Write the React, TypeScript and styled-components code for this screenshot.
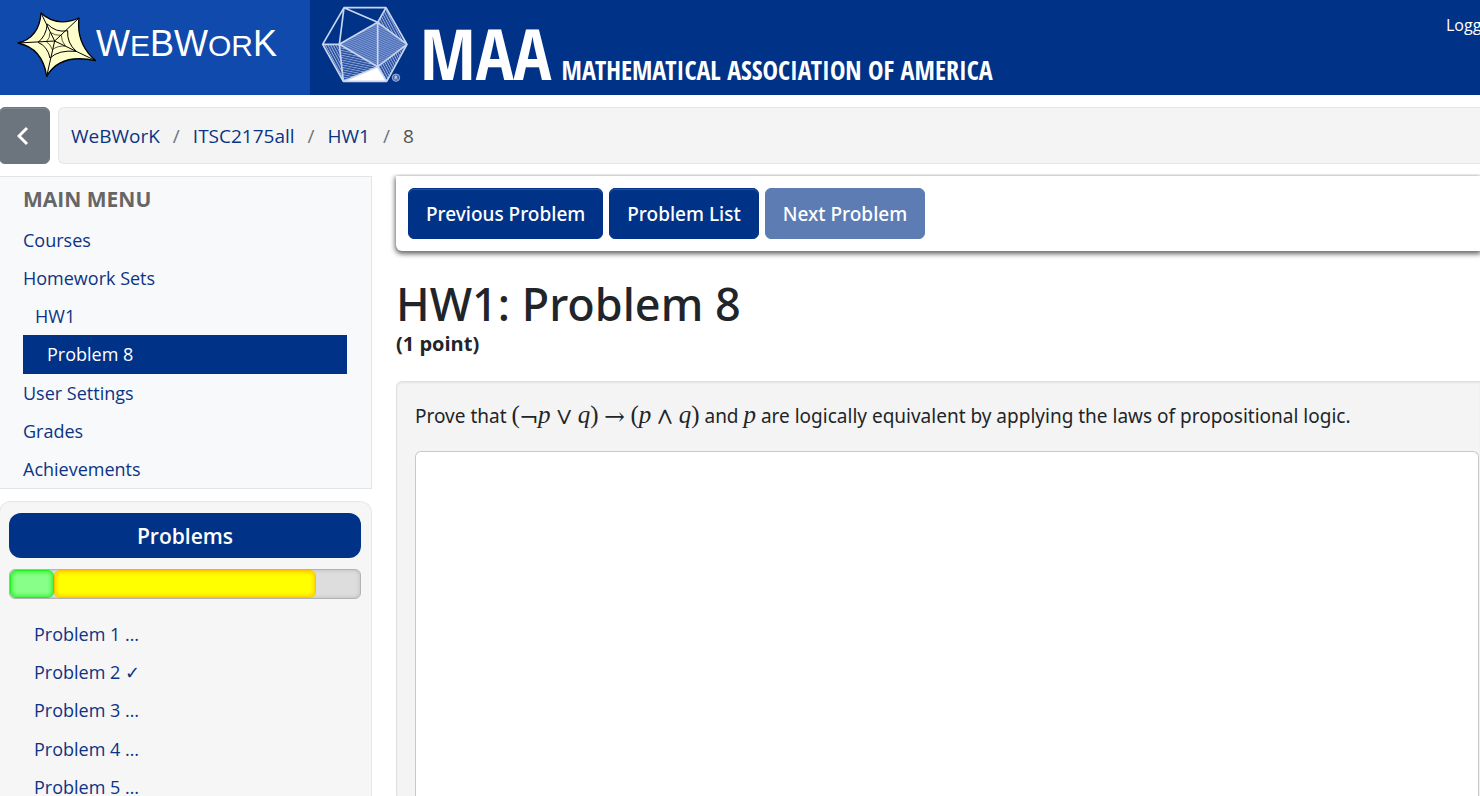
import React from "react";
import styled, { createGlobalStyle } from "styled-components";

const navy = "#003388";
const linkBlue = "#0b3484";
const sans = `"Open Sans", "Noto Sans", sans-serif`;
const display = `"Noto Sans", "Open Sans", sans-serif`;
const math = `"Liberation Serif", "DejaVu Serif", serif`;

const GlobalStyle = createGlobalStyle`
  *, *::before, *::after { box-sizing: border-box; }
  body { margin: 0; background: #fff; color: #212529; font-family: ${sans}; font-size: 18px; line-height: 28px; }
  ul, ol { list-style: none; margin: 0; padding: 0; }
  h1, h2, h3, p { margin: 0; }
  a { color: ${linkBlue}; text-decoration: none; }
  button { font: inherit; cursor: pointer; }
`;

const Page = styled.div`
  display: flex;
  flex-direction: column;
  height: 100vh;
  overflow: hidden;
`;

const Masthead = styled.header`
  display: flex;
  flex: none;
  height: 95px;
  background: ${navy};
  color: #fff;
`;

const WebworkBrand = styled.a`
  display: flex;
  align-items: center;
  flex: none;
  width: 310px;
  padding: 0 0 6px 16px;
  background: #104aad;
  color: #fff;
`;

const Wordmark = styled.span`
  font-family: "Liberation Sans", Arial, sans-serif;
  font-size: 36px;
  line-height: 40px;
`;

const SmallCap = styled.span`
  font-size: 30px;
`;

const MaaBrand = styled.a`
  display: flex;
  align-items: flex-start;
  flex: none;
  padding: 5px 0 0 10px;
  color: #fff;
`;

const MaaWords = styled.span`
  display: flex;
  align-items: baseline;
  gap: 10px;
  padding-left: 10px;
  font-family: "Liberation Sans Narrow", "Open Sans Condensed", "Roboto Condensed", "Liberation Sans", sans-serif;
  font-weight: 700;
  white-space: nowrap;
`;

const MaaInitials = styled.span`
  font-size: 71px;
  line-height: 96px;
`;

const MaaName = styled.span`
  font-size: 26px;
`;

const LoginStatus = styled.div`
  width: 34px;
  margin-left: auto;
  padding-top: 11px;
  overflow: hidden;
  font-size: 16px;
`;

const CrumbRow = styled.div`
  display: flex;
  flex: none;
  gap: 8px;
  height: 57px;
  margin: 12px 0 12px -1px;
`;

const ToggleButton = styled.button`
  display: flex;
  align-items: center;
  justify-content: center;
  width: 51px;
  padding: 0 4px 0 0;
  border: 1px solid #6c757d;
  border-radius: 6px;
  background: #6c757d;
  box-shadow: inset 0 1px 0 rgba(255, 255, 255, 0.15);
  color: #fff;
`;

const CrumbBar = styled.nav`
  display: flex;
  align-items: center;
  flex: 1;
  padding: 1px 12px 0;
  border: 1px solid #e6e6e6;
  border-right: 0;
  border-radius: 6px 0 0 6px;
  background: #f4f4f4;
`;

const Crumbs = styled.ol`
  display: flex;
  font-size: 19px;
`;

const Crumb = styled.li`
  color: #555;
  & + &::before {
    content: "/";
    padding: 0 13px;
    color: #6c757d;
  }
`;

const Columns = styled.div`
  display: flex;
  flex: 1;
  gap: 24px;
  min-height: 0;
`;

const Sidebar = styled.aside`
  display: flex;
  flex-direction: column;
  flex: none;
  gap: 12px;
  width: 373px;
  margin-left: -1px;
`;

const MenuPanel = styled.nav`
  flex: none;
  padding: 0 24px 0 23px;
  border: 1px solid #e3e4e6;
  background: #f8f9fb;
`;

const MenuTitle = styled.h2`
  color: #666;
  font-size: 21px;
  line-height: 44px;
`;

const LinkList = styled.ul`
  display: grid;
  grid-auto-rows: 1fr;
`;

const MenuList = styled(LinkList)`
  min-height: 267px;
`;

const ProblemLinks = styled(LinkList)`
  min-height: 191px;
  padding-left: 25px;
`;

const ListLink = styled.a<{ $depth?: number; $active?: boolean }>`
  display: flex;
  align-items: center;
  height: 100%;
  padding-left: ${(p) => (p.$depth ?? 0) * 12}px;
  background: ${(p) => (p.$active ? navy : "transparent")};
  color: ${(p) => (p.$active ? "#fff" : linkBlue)};
`;

const ProblemsPanel = styled.section`
  flex: 1;
  padding: 11px 10px 0 9px;
  border: 1px solid #e6e6e6;
  border-bottom: 0;
  border-radius: 12px 12px 0 0;
  background: #f6f6f6;
`;

const ProblemsTitle = styled.h2`
  margin-bottom: 11px;
  padding-top: 1px;
  border-radius: 12px;
  background: ${navy};
  color: #fff;
  font-size: 21px;
  font-weight: 600;
  line-height: 44px;
  text-align: center;
`;

const Progress = styled.div`
  display: flex;
  height: 30px;
  margin-bottom: 16px;
  border: 1px solid #b3b3b3;
  border-radius: 6px;
  background: #ddd;
  box-shadow: inset 0 0 4px #bbb;
`;

const Segment = styled.span<{ $fill: string; $edge: string }>`
  border: 1px solid ${(p) => p.$edge};
  border-radius: 6px;
  background: ${(p) => p.$fill};
  box-shadow: inset 0 0 4px 1px ${(p) => p.$edge};
`;

const Main = styled.main`
  display: flex;
  flex-direction: column;
  flex: 1;
  min-width: 0;
`;

const Toolbar = styled.div`
  display: flex;
  flex: none;
  gap: 6px;
  padding: 12px;
  border-radius: 0 0 0 6px;
  box-shadow: 0 2px 5px 1px rgba(0, 0, 0, 0.6);
  clip-path: inset(-2px 0 -12px -12px);
`;

const NavButton = styled.button`
  height: 51px;
  padding: 0 17px;
  border: 1px solid ${navy};
  border-radius: 6px;
  background: ${navy};
  box-shadow: inset 0 1px 0 rgba(255, 255, 255, 0.15);
  color: #fff;
  font-family: ${display};
  font-size: 19px;
  font-weight: 500;
  white-space: nowrap;
  &:disabled {
    border-color: #5c7cb3;
    background: #5c7cb3;
    box-shadow: none;
    cursor: default;
  }
`;

const Title = styled.h1`
  margin-top: 24px;
  font-family: ${display};
  font-size: 45px;
  font-weight: 500;
  line-height: 57px;
`;

const Points = styled.h3`
  font-size: 20px;
  font-weight: 700;
  line-height: 24px;
`;

const ProblemBody = styled.section`
  display: flex;
  flex-direction: column;
  flex: 1;
  gap: 20px;
  margin-top: 25px;
  padding: 20px 1px 0 18px;
  border: 1px solid #e0e0e0;
  border-width: 1px 0 0 1px;
  border-radius: 6px 0 0 0;
  background: #f4f4f4;
  box-shadow: inset 0 1px 2px rgba(0, 0, 0, 0.07);
`;

const Statement = styled.p`
  height: 29px;
  font-family: ${display};
  font-size: 19px;
  white-space: nowrap;
`;

const Formula = styled.span`
  font-family: ${math};
  font-size: 25px;
  line-height: 24px;
`;

const Variable = styled.i``;

const Operator = styled.span<{ $space?: number }>`
  margin: 0 ${(p) => p.$space ?? 0}px;
  font-family: "DejaVu Math TeX Gyre", "DejaVu Serif", serif;
  font-size: 22px;
  line-height: 24px;
`;

const Answer = styled.textarea`
  flex: 1;
  width: 100%;
  padding: 12px;
  border: 1px solid #c8c8c8;
  border-bottom: 0;
  border-radius: 6px 6px 0 0;
  background: #fff;
  font: inherit;
  resize: none;
`;

const WebLogo = () => (
  <svg width="80" height="68" viewBox="48 32 240 204" fill="none" stroke="#000" strokeWidth="4" strokeLinejoin="round" aria-hidden="true">
    <path
      fill="#ffffcc"
      d="M54 128Q118 112 123 38Q170 82 237 53Q228 130 287 181Q180 158 140 228Q128 144 54 128Z"
    />
    <path strokeWidth="3" d="M54 128L164 122M123 38L164 122M237 53L164 122M287 181L164 122M140 228L164 122" />
    <path strokeWidth="3" d="M114 126Q138 108 142 71Q168 98 203 91Q200 128 229 153Q176 148 150 173Q143 138 114 126Z" />
    <path strokeWidth="2" d="M139 124Q150 114 150 96Q166 106 184 105Q184 122 196 137Q172 136 157 148Q152 132 139 124Z" />
  </svg>
);

const MaaLogo = () => (
  <svg width="90" height="80" viewBox="30 14 270 240" aria-hidden="true">
    <defs>
      <pattern id="fall" width="6" height="6" patternUnits="userSpaceOnUse" patternTransform="rotate(24)">
        <rect width="6" height="6" fill="#4468b4" />
        <rect width="6" height="3" fill="#809bd3" />
      </pattern>
      <pattern id="level" width="7" height="7" patternUnits="userSpaceOnUse" patternTransform="rotate(12)">
        <rect width="7" height="7" fill="#1d489a" />
        <rect width="7" height="3" fill="#8ea5d6" />
      </pattern>
      <pattern id="steep" width="7" height="7" patternUnits="userSpaceOnUse" patternTransform="rotate(62)">
        <rect width="7" height="7" fill="#1d489a" />
        <rect width="7" height="3" fill="#9db2de" />
      </pattern>
    </defs>
    <path fill="url(#fall)" d="M203 66L88 132L203 199L291 132Z" />
    <path fill="url(#level)" d="M88 132L203 199L100 243Z" />
    <path fill="url(#steep)" d="M228 22L203 66L291 132ZM38 132L88 132L100 243ZM203 199L291 132L230 243Z" />
    <path fill="#fff" d="M203 199L230 243L100 243Z" />
    <path
      fill="none"
      stroke="#c9d6f0"
      strokeWidth="5"
      strokeLinejoin="round"
      d="M38 132L102 22L228 22L291 132L230 243L100 243ZM102 22L203 66L228 22M203 66L291 132L203 199ZM203 66L88 132L203 199M38 132L88 132L102 22M88 132L100 243L203 199L230 243"
    />
    <circle cx="258" cy="232" r="11" fill="#3c61ad" stroke="#9db2de" strokeWidth="3" />
    <path d="M255 238V227H259Q262 230 259 232H255M259 232L262 238" fill="none" stroke="#fff" strokeWidth="2" />
  </svg>
);

const ChevronLeft = () => (
  <svg width="12" height="20" viewBox="0 0 12 20" fill="none" stroke="#fff" strokeWidth="3" aria-hidden="true">
    <path d="M10 2L2 10L10 18" />
  </svg>
);

const menu = [
  { label: "Courses" },
  { label: "Homework Sets" },
  { label: "HW1", depth: 1 },
  { label: "Problem 8", depth: 2, active: true },
  { label: "User Settings" },
  { label: "Grades" },
  { label: "Achievements" },
];

const problems = ["Problem 1 …", "Problem 2 ✓", "Problem 3 …", "Problem 4 …", "Problem 5 …"];

const progress = [
  { share: 12.5, fill: "#88ff88", edge: "#22f022" },
  { share: 75, fill: "#ffff00", edge: "#ffc400" },
];

export default function App() {
  return (
    <Page>
      <GlobalStyle />
      <Masthead>
        <WebworkBrand href="#">
          <WebLogo />
          <Wordmark>
            W<SmallCap>E</SmallCap>BW<SmallCap>OR</SmallCap>K
          </Wordmark>
        </WebworkBrand>
        <MaaBrand href="#">
          <MaaLogo />
          <MaaWords>
            <MaaInitials>MAA</MaaInitials>
            <MaaName>MATHEMATICAL ASSOCIATION OF AMERICA</MaaName>
          </MaaWords>
        </MaaBrand>
        <LoginStatus>Logg</LoginStatus>
      </Masthead>

      <CrumbRow>
        <ToggleButton type="button" aria-label="Toggle menu">
          <ChevronLeft />
        </ToggleButton>
        <CrumbBar aria-label="Breadcrumb">
          <Crumbs>
            <Crumb><a href="#">WeBWorK</a></Crumb>
            <Crumb><a href="#">ITSC2175all</a></Crumb>
            <Crumb><a href="#">HW1</a></Crumb>
            <Crumb>8</Crumb>
          </Crumbs>
        </CrumbBar>
      </CrumbRow>

      <Columns>
        <Sidebar>
          <MenuPanel>
            <MenuTitle>MAIN MENU</MenuTitle>
            <MenuList>
              {menu.map((item) => (
                <li key={item.label}>
                  <ListLink href="#" $depth={item.depth} $active={item.active}>{item.label}</ListLink>
                </li>
              ))}
            </MenuList>
          </MenuPanel>
          <ProblemsPanel>
            <ProblemsTitle>Problems</ProblemsTitle>
            <Progress>
              {progress.map((s) => (
                <Segment key={s.fill} $fill={s.fill} $edge={s.edge} style={{ width: `${s.share}%` }} />
              ))}
            </Progress>
            <ProblemLinks>
              {problems.map((p) => (
                <li key={p}><ListLink href="#">{p}</ListLink></li>
              ))}
            </ProblemLinks>
          </ProblemsPanel>
        </Sidebar>

        <Main>
          <Toolbar>
            <NavButton type="button">Previous Problem</NavButton>
            <NavButton type="button">Problem List</NavButton>
            <NavButton type="button" disabled>Next Problem</NavButton>
          </Toolbar>
          <Title>HW1: Problem 8</Title>
          <Points>(1 point)</Points>
          <ProblemBody>
            <Statement>
              Prove that{" "}
              <Formula>
                (<Operator>¬</Operator><Variable>p</Variable>
                <Operator $space={5}>∨</Operator>
                <Variable>q</Variable>)
                <Operator $space={5}>→</Operator>
                (<Variable>p</Variable>
                <Operator $space={5}>∧</Operator>
                <Variable>q</Variable>)
              </Formula>{" "}
              and <Formula><Variable>p</Variable></Formula> are logically equivalent by applying the laws of propositional logic.
            </Statement>
            <Answer aria-label="Answer" />
          </ProblemBody>
        </Main>
      </Columns>
    </Page>
  );
}
